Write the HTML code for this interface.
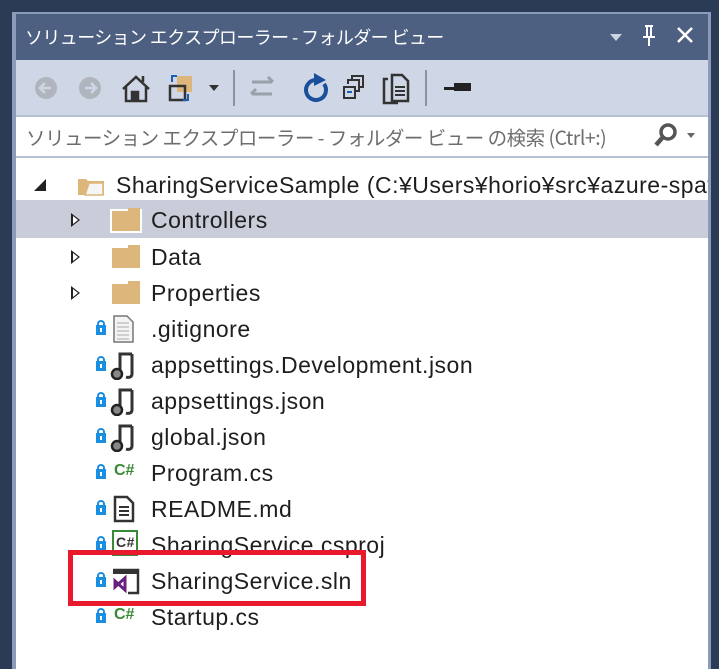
<!DOCTYPE html>
<html><head><meta charset="utf-8"><style>
*{margin:0;padding:0;box-sizing:border-box}
body{width:719px;height:669px;background:#2b3a55;position:relative;overflow:hidden;font-family:"Liberation Sans","Noto Sans CJK JP",sans-serif}
.abs{position:absolute}
#panel{left:12px;top:12px;width:699px;height:657px;background:#8a9abb}
#title{left:16px;top:14px;width:692px;height:46px;background:#4d6082;color:#fff;font-size:18px;line-height:46px;padding-left:9px;font-family:"Noto Sans CJK JP",sans-serif;letter-spacing:-0.6px}
#tb{left:16px;top:60px;width:692px;height:56px;background:#cfd6e5}
#search{left:16px;top:115px;width:692px;height:43px;background:#fff;border-top:2px solid #b8c1d4;border-bottom:2px solid #b8c1d4;color:#6d6d6d;font-size:19.5px;line-height:39px;padding-left:10px;font-family:"Noto Sans CJK JP",sans-serif;letter-spacing:-0.5px}
#tree{left:16px;top:158px;width:692px;height:511px;background:#fff}
.row{position:absolute;left:16px;width:692px;height:36px;font-size:23px;line-height:36px;color:#1e1e1e;letter-spacing:0.5px;font-family:"Liberation Sans","Noto Sans CJK JP",sans-serif;overflow:hidden}
.row span{position:absolute;left:135px;white-space:nowrap}
.lock{position:absolute;left:80px;top:14px;width:10px;height:10px;background:#1a8ee0}
.lock:before{content:"";position:absolute;left:1px;top:-5px;height:6px;border:2px solid #1a8ee0;border-bottom:none;border-radius:4px 4px 0 0;box-sizing:content-box;width:4px}
.lock:after{content:"";position:absolute;left:4px;top:3px;width:2px;height:4px;background:#fff}
.fold{position:absolute;left:96px;top:9px;width:28px;height:20px;background:#dcb67a}
.fold:before{content:"";position:absolute;left:16px;top:-3px;width:12px;height:3px;background:#dcb67a}
.arr{position:absolute;left:55px;top:11px;width:0;height:0;border-left:9px solid #222;border-top:7px solid transparent;border-bottom:7px solid transparent}
.arr:after{content:"";position:absolute;left:-7px;top:-4px;border-left:5px solid #fff;border-top:4px solid transparent;border-bottom:4px solid transparent}
.cs{position:absolute;left:98px;top:-2px;font-size:16px;font-weight:bold;color:#388a34;font-family:"Liberation Sans",sans-serif;letter-spacing:0}
</style></head><body>
<div id="panel" class="abs"></div>
<div id="title" class="abs">ソリューション エクスプローラー - フォルダー ビュー</div>
<svg class="abs" style="left:600px;top:20px" width="110" height="36">
<polygon points="10,14 22,14 16,21" fill="#cdd4e0"/>
<path d="M45 6h8M47 6v11M51 6v11M43 17h12M49 17v9" stroke="#fff" stroke-width="2" fill="none"/>
<path d="M78 8l14 14M92 8l-14 14" stroke="#fff" stroke-width="2.5"/>
</svg>
<div id="tb" class="abs"></div>
<svg class="abs" style="left:20px;top:62px" width="460" height="52">
<circle cx="26" cy="26" r="11" fill="#b0b4bc"/><path d="M31 26h-10M25 21l-5 5 5 5" stroke="#cfd6e5" stroke-width="2.5" fill="none"/>
<circle cx="70" cy="26" r="11" fill="#b0b4bc"/><path d="M65 26h10M71 21l5 5-5 5" stroke="#cfd6e5" stroke-width="2.5" fill="none"/>
<path d="M103 27l13-12 13 12M106 25v14h20v-14M112 39v-9h6v9" stroke="#333" stroke-width="2.5" fill="none"/><rect x="112" y="30" width="6" height="9" fill="#333"/><path d="M123 14v6" stroke="#333" stroke-width="2.5"/>
<rect x="157" y="14" width="15" height="16" fill="#dcb67a"/><rect x="150" y="24" width="15" height="14" fill="none" stroke="#333" stroke-width="2.5"/>
<path d="M152 20v-6h5M168 32v6h-5" stroke="#1a5fb4" stroke-width="2" fill="none"/>
<polygon points="189,23 199,23 194,29" fill="#333"/>
<rect x="213" y="8" width="2" height="36" fill="#8a93a6"/>
<path d="M232 20h20M248 15l5 5M232 32h20M236 27l-5 5" stroke="#9aa0aa" stroke-width="3" fill="none"/>
<path d="M296 18a10 10 0 1 0 8 4" stroke="#1a4f9c" stroke-width="4" fill="none"/><polygon points="294,11 306,18 294,24" fill="#1a4f9c"/>
<rect x="324" y="25" width="11" height="11" fill="none" stroke="#333" stroke-width="2"/><path d="M328 22v-4h11v11h-3M332 18v-4h11v11h-3" stroke="#333" stroke-width="2" fill="none"/><path d="M327 30h5" stroke="#1a5fb4" stroke-width="2"/>
<path d="M368 17h-4v24h14M372 13h10l6 6v20h-16z" stroke="#333" stroke-width="2.5" fill="none"/><path d="M375 25h10M375 29h10M375 33h10" stroke="#333" stroke-width="2"/>
<rect x="405" y="8" width="2" height="36" fill="#8a93a6"/>
<rect x="424" y="25" width="10" height="3" fill="#222"/><rect x="434" y="21" width="17" height="8" fill="#222"/>
</svg>
<div id="search" class="abs">ソリューション エクスプローラー - フォルダー ビュー の検索 (Ctrl+:)</div>
<svg class="abs" style="left:650px;top:120px" width="56" height="34">
<circle cx="18" cy="12" r="7" stroke="#555" stroke-width="3.5" fill="none"/><path d="M13 17l-7 8" stroke="#555" stroke-width="4.5"/>
<polygon points="37,13 45,13 41,18" fill="#666"/>
</svg>
<div id="tree" class="abs"></div>
<div class="row" style="top:167px"><svg class="abs" style="left:18px;top:11px" width="14" height="14"><polygon points="12,1 12,13 0,13" fill="#222"/></svg>
<svg class="abs" style="left:60px;top:6px" width="32" height="26"><path d="M2 22V6h8l2 2h16v14z" fill="#dcb67a"/><path d="M9 22l4-12h14v12z" fill="#f5f5f5" stroke="#dcb67a" stroke-width="1.5"/></svg>
<span style="left:100px">SharingServiceSample (C:¥Users¥horio¥src¥azure-spatial</span></div>
<div class="row" style="top:200px;height:38px;line-height:40px;background:#c9ccd9"><div class="arr" style="top:13px"></div><div class="fold" style="outline:2px solid #fff;top:11px"></div><span>Controllers</span></div>
<div class="row" style="top:239px"><div class="arr"></div><div class="fold"></div><span>Data</span></div>
<div class="row" style="top:275px"><div class="arr"></div><div class="fold"></div><span>Properties</span></div>
<div class="row" style="top:311px"><div class="lock"></div><svg class="abs" style="left:97px;top:4px" width="22" height="28"><path d="M1 1h13l6 6v20H1z" fill="#f4f4f4" stroke="#777" stroke-width="1.5"/><path d="M4 8h12M4 12h12M4 16h12M4 20h12M4 24h12" stroke="#aaa"/></svg><span>.gitignore</span></div>
<div class="row" style="top:347px"><div class="lock"></div><svg class="abs" style="left:92px;top:3px" width="30" height="30"><path d="M12 26V4h12M24 4v20c0 3-3 4-6 3" stroke="#333" stroke-width="3" fill="none"/><circle cx="9" cy="24" r="5" fill="#888" stroke="#222" stroke-width="2.5"/></svg><span>appsettings.Development.json</span></div>
<div class="row" style="top:383px"><div class="lock"></div><svg class="abs" style="left:92px;top:3px" width="30" height="30"><path d="M12 26V4h12M24 4v20c0 3-3 4-6 3" stroke="#333" stroke-width="3" fill="none"/><circle cx="9" cy="24" r="5" fill="#888" stroke="#222" stroke-width="2.5"/></svg><span>appsettings.json</span></div>
<div class="row" style="top:419px"><div class="lock"></div><svg class="abs" style="left:92px;top:3px" width="30" height="30"><path d="M12 26V4h12M24 4v20c0 3-3 4-6 3" stroke="#333" stroke-width="3" fill="none"/><circle cx="9" cy="24" r="5" fill="#888" stroke="#222" stroke-width="2.5"/></svg><span>global.json</span></div>
<div class="row" style="top:455px"><div class="lock"></div><div class="cs">C#</div><span>Program.cs</span></div>
<div class="row" style="top:491px"><div class="lock"></div><svg class="abs" style="left:97px;top:4px" width="22" height="28"><path d="M2 2h12l6 6v18H2z" fill="#fff" stroke="#333" stroke-width="2.5"/><path d="M6 12h10M6 16h10M6 20h10" stroke="#333" stroke-width="2"/></svg><span>README.md</span></div>
<div class="row" style="top:527px"><div class="lock"></div><svg class="abs" style="left:95px;top:2px" width="28" height="28"><rect x="2" y="2" width="24" height="24" fill="#fff" stroke="#388a34" stroke-width="2"/><text x="5" y="18" font-size="14" font-weight="bold" fill="#333" font-family="Liberation Sans">C#</text></svg><span>SharingService.csproj</span></div>
<div class="row" style="top:563px"><div class="lock"></div><svg class="abs" style="left:95px;top:4px" width="30" height="28"><path d="M2 3h25v23h-10" stroke="#333" stroke-width="2.5" fill="none"/><rect x="2" y="2" width="25" height="5" fill="#333"/><path d="M4 14l10 9V11L4 20z" stroke="#68217a" stroke-width="3" fill="none"/></svg><span>SharingService.sln</span></div>
<div class="row" style="top:599px"><div class="lock"></div><div class="cs">C#</div><span>Startup.cs</span></div>
<div class="abs" style="left:68px;top:550px;width:298px;height:56px;border:5px solid #e8192c"></div>
</body></html>
